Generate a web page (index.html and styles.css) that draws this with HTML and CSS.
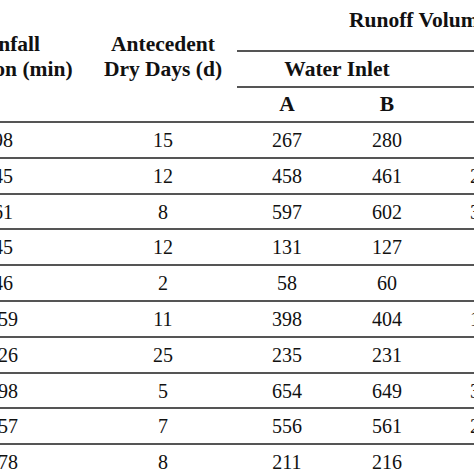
FILE: index.html
```html
<!DOCTYPE html>
<html>
<head>
<meta charset="utf-8">
<link rel="stylesheet" href="styles.css">
</head>
<body>
<div class="frame">
<table class="tbl">
<colgroup>
<col class="c1"><col class="c2"><col class="c3"><col class="c4"><col class="c5"><col class="c6">
</colgroup>
<thead>
<tr>
<th class="side c-second-h c-first" rowspan="3">Rainfall<br>Duration (min)</th>
<th class="side c-second" rowspan="3">Antecedent<br>Dry Days (d)</th>
<th class="group" colspan="4">Runoff Volume (m³)</th>
</tr>
<tr>
<th class="sub" colspan="2">Water Inlet</th>
<th class="sub" colspan="2">Water Outlet</th>
</tr>
<tr>
<th class="letter">A</th>
<th class="letter">B</th>
<th class="letter">A</th>
<th class="letter">B</th>
</tr>
</thead>
<tbody>
<tr><td>98</td><td class="c-second">15</td><td>267</td><td>280</td><td>95</td><td>99</td></tr>
<tr><td>45</td><td class="c-second">12</td><td>458</td><td>461</td><td>245</td><td>251</td></tr>
<tr><td>61</td><td class="c-second">8</td><td>597</td><td>602</td><td>312</td><td>318</td></tr>
<tr><td>45</td><td class="c-second">12</td><td>131</td><td>127</td><td>48</td><td>52</td></tr>
<tr><td>46</td><td class="c-second">2</td><td>58</td><td>60</td><td>21</td><td>23</td></tr>
<tr><td>159</td><td class="c-second">11</td><td>398</td><td>404</td><td>156</td><td>161</td></tr>
<tr><td>126</td><td class="c-second">25</td><td>235</td><td>231</td><td>89</td><td>92</td></tr>
<tr><td>198</td><td class="c-second">5</td><td>654</td><td>649</td><td>324</td><td>330</td></tr>
<tr><td>157</td><td class="c-second">7</td><td>556</td><td>561</td><td>268</td><td>272</td></tr>
<tr><td>178</td><td class="c-second">8</td><td>211</td><td>216</td><td>76</td><td>80</td></tr>
</tbody>
</table>
</div>
</body>
</html>
```
FILE: styles.css
```css
html, body {
  margin: 0;
  padding: 0;
  background: #ffffff;
}
.frame {
  width: 474px;
  height: 474px;
  overflow: hidden;
}
.tbl {
  margin-left: -77px;
  width: 714px;
  table-layout: fixed;
  border-collapse: separate;
  border-spacing: 0;
  font-family: "Liberation Serif", "Times New Roman", serif;
  color: #111111;
}
.c1 { width: 160px; }
.c2 { width: 154px; }
.c3 { width: 100px; }
.c4 { width: 100px; }
.c5 { width: 96px; }
.c6 { width: 104px; }
th {
  font-weight: bold;
  font-size: 21.5px;
  line-height: 25px;
  text-align: center;
  vertical-align: top;
  padding: 0;
  white-space: nowrap;
}
.side {
  padding-top: 32px;
  border-bottom: 2px solid #555555;
}
.c-second {
  padding-left: 6px;
}
.group {
  height: 52px;
  box-sizing: border-box;
  padding-top: 8px;
  border-bottom: 2px solid #555555;
  text-align: left;
  padding-left: 112px;
}
.sub {
  padding-top: 5px;
  padding-bottom: 4px;
  border-bottom: 2px solid #555555;
}
.letter {
  padding-top: 4px;
  padding-bottom: 4px;
  border-bottom: 2px solid #555555;
}
td {
  font-size: 20px;
  line-height: 32.8px;
  padding: 1px 0 0 0;
  text-align: center;
  vertical-align: top;
  border-bottom: 2px solid #555555;
  white-space: nowrap;
}
```
